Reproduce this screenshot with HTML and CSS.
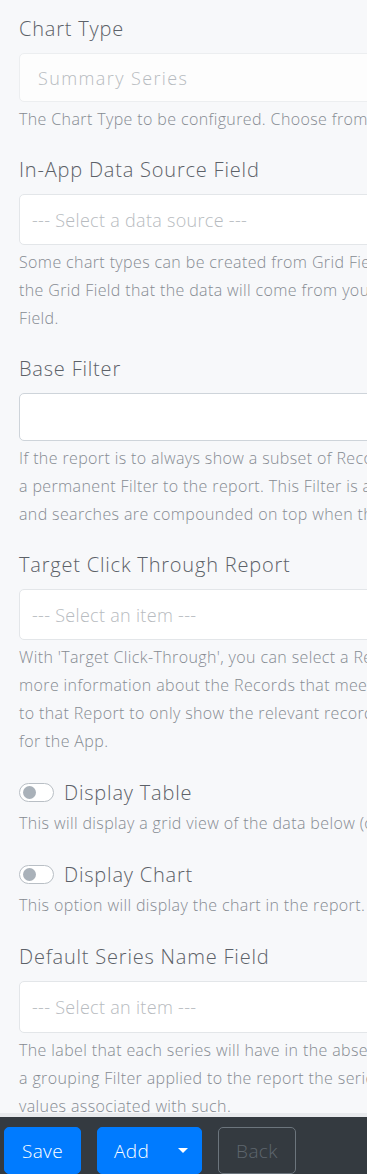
FILE: index.html
```html
<!DOCTYPE html>
<html lang="en">
<head>
<meta charset="utf-8">
<title>Chart Settings</title>
<link rel="stylesheet" href="styles.css">
</head>
<body>
<main class="form">
  <section class="field first">
    <label class="label">Chart Type</label>
    <div class="control disabled h49"><span class="value">Summary Series</span></div>
    <p class="help">The Chart Type to be configured. Choose from the list of available types.</p>
  </section>

  <section class="field">
    <label class="label">In-App Data Source Field</label>
    <div class="control h51"><span class="placeholder">--- Select a data source ---</span></div>
    <p class="help">Some chart types can be created from Grid Fields. If so, select<br>the Grid Field that the data will come from you can use as the<br>Field.</p>
  </section>

  <section class="field">
    <label class="label">Base Filter</label>
    <div class="control text h48"></div>
    <p class="help">If the report is to always show a subset of Records, you can apply<br>a permanent Filter to the report. This Filter is always applied<br>and searches are compounded on top when the report is run.</p>
  </section>

  <section class="field">
    <label class="label">Target Click Through Report</label>
    <div class="control h51"><span class="placeholder">--- Select an item ---</span></div>
    <p class="help">With 'Target Click-Through', you can select a Report that shows<br>more information about the Records that meet the criteria, linking<br>to that Report to only show the relevant records as defined<br>for the App.</p>
  </section>

  <section class="field switch-field">
    <div class="switch-row"><span class="switch"><span class="knob"></span></span><span class="switch-label">Display Table</span></div>
    <p class="help">This will display a grid view of the data below (or above) the chart.</p>
  </section>

  <section class="field switch-field">
    <div class="switch-row"><span class="switch"><span class="knob"></span></span><span class="switch-label">Display Chart</span></div>
    <p class="help">This option will display the chart in the report.</p>
  </section>

  <section class="field last">
    <label class="label">Default Series Name Field</label>
    <div class="control h52"><span class="placeholder">--- Select an item ---</span></div>
    <p class="help">The label that each series will have in the absence of a value. If<br>a grouping Filter applied to the report the series will use the<br>values associated with such.</p>
  </section>
</main>

<footer class="actions">
  <button class="btn btn-primary save">Save</button>
  <button class="btn btn-primary add"><span>Add</span><span class="caret"></span></button>
  <button class="btn btn-outline back">Back</button>
</footer>
</body>
</html>
```

FILE: styles.css
```css
html, body {
  margin: 0;
  padding: 0;
}

body {
  background: #f7f8fa;
  font-family: "Open Sans", "Liberation Sans", sans-serif;
  font-weight: 300;
  overflow: hidden;
  width: 367px;
  height: 1174px;
}

.form {
  width: 620px;
  padding: 14px 0 0 19px;
}

.field {
  margin-top: 22px;
}

.field.first {
  margin-top: 0;
}

.field.last {
  margin-top: 23px;
}

.label {
  display: block;
  font-size: 20px;
  line-height: 30px;
  color: #5c6168;
  letter-spacing: 0.8px;
  margin-bottom: 9px;
}

.control {
  box-sizing: border-box;
  background: #fff;
  border: 1px solid #e3e6e9;
  border-radius: 5px;
  display: flex;
  align-items: center;
  padding-left: 12px;
  font-size: 18px;
  letter-spacing: 0.3px;
}

.control.disabled {
  background: #fdfdfd;
  border-color: #eceef0;
  padding-left: 18px;
  letter-spacing: 1.4px;
}

.control.text {
  border-color: #ced4da;
}

.h48 { height: 48px; }
.h49 { height: 49px; }
.h51 { height: 51px; }
.h52 { height: 52px; }

.value,
.placeholder {
  color: #b7bbc0;
}

.help {
  margin: 3px 0 0;
  font-size: 16px;
  line-height: 28px;
  color: #868b92;
  letter-spacing: 0.38px;
  white-space: nowrap;
}

.switch-field .help {
  margin-top: 2px;
}

.switch-row {
  display: flex;
  align-items: center;
  height: 30px;
}

.switch {
  box-sizing: border-box;
  width: 35px;
  height: 19px;
  border: 1px solid #b9bfc5;
  border-radius: 10px;
  background: #fff;
  display: flex;
  align-items: center;
  padding-left: 3px;
  margin-right: 10px;
}

.knob {
  width: 13px;
  height: 13px;
  border-radius: 50%;
  background: #a9b1b9;
}

.switch-label {
  font-size: 20px;
  color: #5c6168;
  letter-spacing: 0.8px;
}

.actions {
  position: fixed;
  left: 0;
  right: 0;
  bottom: 0;
  height: 47px;
  background: #343a40;
  border-top: 4px solid #e8eaed;
  display: flex;
  align-items: flex-start;
  gap: 16px;
  padding: 10px 0 0 4px;
}

.btn {
  height: 47px;
  border-radius: 5px;
  font-family: inherit;
  font-weight: 300;
  font-size: 19px;
  letter-spacing: 0.4px;
  padding: 0;
  display: flex;
  align-items: center;
  justify-content: center;
  box-sizing: border-box;
}

.btn-primary {
  background: #007bff;
  border: 1px solid #007bff;
  color: #fff;
}

.save {
  width: 77px;
}

.add {
  width: 105px;
  justify-content: flex-start;
  padding-left: 16px;
}

.caret {
  width: 0;
  height: 0;
  border-left: 5px solid transparent;
  border-right: 5px solid transparent;
  border-top: 5px solid #fff;
  margin-left: auto;
  margin-right: 13px;
}

.btn-outline {
  background: transparent;
  border: 1px solid #6c757d;
  color: #5e666e;
}

.back {
  width: 78px;
}
```
